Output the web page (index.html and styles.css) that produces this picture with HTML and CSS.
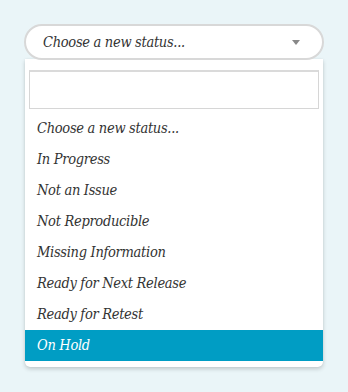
FILE: index.html
```html
<!DOCTYPE html>
<html>
<head>
<meta charset="utf-8">
<link rel="stylesheet" href="styles.css">
</head>
<body>
<div class="wrap">
  <div class="select">
    <span class="select-label">Choose a new status...</span>
    <span class="arrow"></span>
  </div>
  <div class="drop">
    <div class="search-row"><div class="search"></div></div>
    <ul class="options">
      <li>Choose a new status...</li>
      <li>In Progress</li>
      <li>Not an Issue</li>
      <li>Not Reproducible</li>
      <li>Missing Information</li>
      <li>Ready for Next Release</li>
      <li>Ready for Retest</li>
      <li class="active">On Hold</li>
    </ul>
  </div>
</div>
</body>
</html>
```
FILE: styles.css
```css
html, body {
  margin: 0;
  padding: 0;
}
body {
  background: #eaf5f8;
  width: 348px;
  height: 392px;
  font-family: "DejaVu Serif Condensed", "DejaVu Serif", serif;
  font-style: italic;
  color: #333;
}
.wrap {
  padding: 24px 0 0 24px;
  width: 300px;
}
.select {
  position: relative;
  z-index: 2;
  box-sizing: border-box;
  height: 36px;
  width: 300px;
  border: 2px solid #d8d8d8;
  border-radius: 18px;
  background: #fff;
  display: flex;
  align-items: center;
  padding-left: 17px;
  font-size: 14.5px;
  letter-spacing: -0.3px;
}
.select-label {
  flex: 1;
}
.arrow {
  width: 0;
  height: 0;
  border-left: 4px solid transparent;
  border-right: 4px solid transparent;
  border-top: 5px solid #888;
  margin-right: 22px;
}
.drop {
  margin-left: 1px;
  width: 298px;
  margin-top: -1px;
  background: #fff;
  border-radius: 0 0 5px 5px;
  box-shadow: 0 2px 4px rgba(0,0,0,0.18), 0 0 1px rgba(0,0,0,0.12);
  padding-bottom: 6px;
}
.search-row {
  padding: 11px 4px 4px 4px;
}
.search {
  box-sizing: border-box;
  height: 39px;
  border: 1px solid #d6d6d6;
  border-top: 2px solid #dadada;
  background: #fff;
}
.options {
  list-style: none;
  margin: 0;
  padding: 0;
}
.options li {
  height: 31px;
  line-height: 31px;
  padding-left: 12px;
  font-size: 14.5px;
  letter-spacing: -0.3px;
  color: #333;
}
.options li.active {
  background: #009dc4;
  color: #fff;
}
```
